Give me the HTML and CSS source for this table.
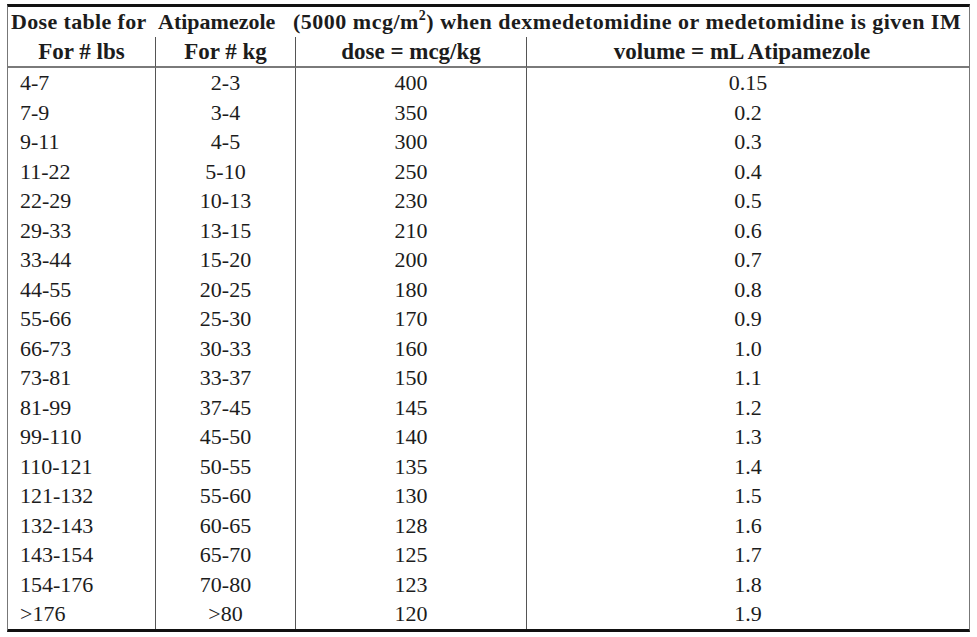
FILE: index.html
```html
<!DOCTYPE html>
<html lang="en">
<head>
<meta charset="utf-8">
<title>Dose table for Atipamezole</title>
<link rel="stylesheet" href="styles.css">
</head>
<body>
<div class="page">
  <table class="dose-table">
    <colgroup>
      <col class="c-lbs">
      <col class="c-kg">
      <col class="c-dose">
      <col class="c-vol">
    </colgroup>
    <thead>
      <tr class="title-row">
        <th class="t1">Dose table for</th>
        <th class="t2">Atipamezole</th>
        <th class="t3" colspan="2">(5000 mcg/m<sup>2</sup>) when dexmedetomidine or medetomidine is given IM</th>
      </tr>
      <tr class="head-row">
        <th>For # lbs</th>
        <th>For # kg</th>
        <th>dose = mcg/kg</th>
        <th class="h-vol">volume = mL Atipamezole</th>
      </tr>
    </thead>
    <tbody>
      <tr><td class="lbs">4-7</td><td>2-3</td><td>400</td><td>0.15</td></tr>
      <tr><td class="lbs">7-9</td><td>3-4</td><td>350</td><td>0.2</td></tr>
      <tr><td class="lbs">9-11</td><td>4-5</td><td>300</td><td>0.3</td></tr>
      <tr><td class="lbs">11-22</td><td>5-10</td><td>250</td><td>0.4</td></tr>
      <tr><td class="lbs">22-29</td><td>10-13</td><td>230</td><td>0.5</td></tr>
      <tr><td class="lbs">29-33</td><td>13-15</td><td>210</td><td>0.6</td></tr>
      <tr><td class="lbs">33-44</td><td>15-20</td><td>200</td><td>0.7</td></tr>
      <tr><td class="lbs">44-55</td><td>20-25</td><td>180</td><td>0.8</td></tr>
      <tr><td class="lbs">55-66</td><td>25-30</td><td>170</td><td>0.9</td></tr>
      <tr><td class="lbs">66-73</td><td>30-33</td><td>160</td><td>1.0</td></tr>
      <tr><td class="lbs">73-81</td><td>33-37</td><td>150</td><td>1.1</td></tr>
      <tr><td class="lbs">81-99</td><td>37-45</td><td>145</td><td>1.2</td></tr>
      <tr><td class="lbs">99-110</td><td>45-50</td><td>140</td><td>1.3</td></tr>
      <tr><td class="lbs">110-121</td><td>50-55</td><td>135</td><td>1.4</td></tr>
      <tr><td class="lbs">121-132</td><td>55-60</td><td>130</td><td>1.5</td></tr>
      <tr><td class="lbs">132-143</td><td>60-65</td><td>128</td><td>1.6</td></tr>
      <tr><td class="lbs">143-154</td><td>65-70</td><td>125</td><td>1.7</td></tr>
      <tr><td class="lbs">154-176</td><td>70-80</td><td>123</td><td>1.8</td></tr>
      <tr><td class="lbs">&gt;176</td><td>&gt;80</td><td>120</td><td>1.9</td></tr>
    </tbody>
  </table>
</div>
</body>
</html>
```

FILE: styles.css
```css
html, body {
  margin: 0;
  padding: 0;
  background: #ffffff;
}

.page {
  padding: 4px 0 0 7px;
}

.dose-table {
  border-collapse: separate;
  border-spacing: 0;
  width: 963px;
  table-layout: fixed;
  font-family: "Liberation Serif", "Times New Roman", serif;
  color: #1c1c1c;
  border-top: 3px solid #111111;
  border-bottom: 3px solid #111111;
  border-left: 1px solid #777777;
  border-right: 1px solid #777777;
}

.c-lbs { width: 148px; }
.c-kg { width: 140px; }
.c-dose { width: 231px; }
.c-vol { width: auto; }

.dose-table th,
.dose-table td {
  padding: 0;
  white-space: nowrap;
  overflow: visible;
}

.title-row th {
  height: 30px;
  font-size: 22px;
  font-weight: bold;
  text-align: left;
  vertical-align: middle;
  line-height: 30px;
}

.title-row .t1 { padding-left: 3px; letter-spacing: 0.35px; }
.title-row .t2 { padding-left: 2px; }
.title-row .t3 { padding-left: 0; text-indent: -3px; letter-spacing: 0.5px; }

.title-row sup {
  font-size: 14px;
  line-height: 0;
  vertical-align: 9px;
}

.head-row th {
  height: 29px;
  font-size: 23px;
  font-weight: bold;
  text-align: center;
  vertical-align: middle;
  line-height: 29px;
  border-bottom: 2px solid #7a7a7a;
  border-right: 1px solid #555555;
}

.head-row .h-vol {
  padding-right: 12px;
}

.head-row th:last-child,
.dose-table td:last-child {
  border-right: none;
}

.dose-table td {
  height: 29.5px;
  font-size: 22px;
  line-height: 29.5px;
  text-align: center;
  vertical-align: middle;
  border-right: 1px solid #555555;
}

.dose-table td.lbs {
  text-align: left;
  padding-left: 12px;
}
```
